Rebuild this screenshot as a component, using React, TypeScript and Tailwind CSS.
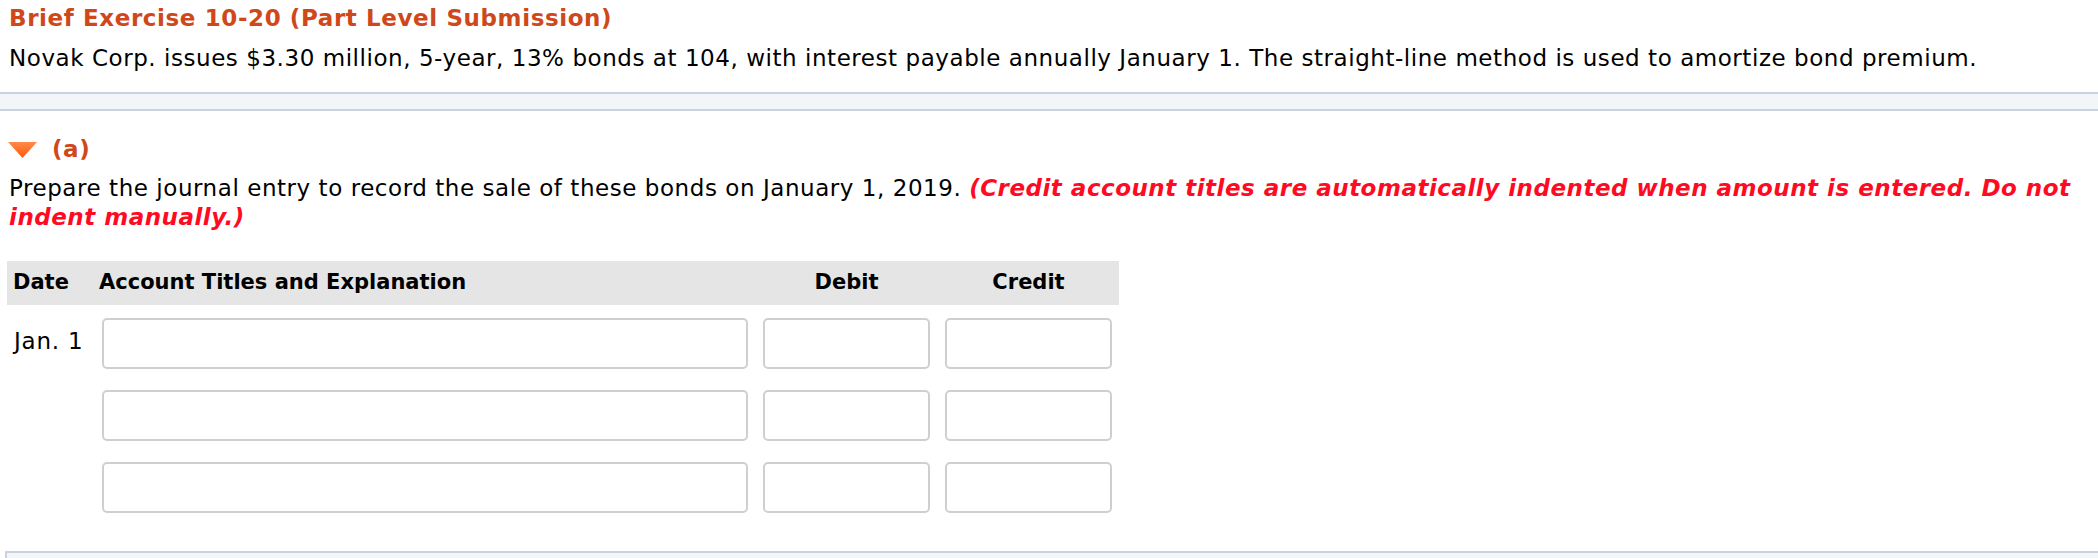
export default function App() {
  const rows = ["Jan. 1", "", ""]

  return (
    <div className="min-h-[558px] bg-white font-['DejaVu_Sans',Verdana,sans-serif] text-[23px] tracking-[0.55px] text-black">
      {/* Exercise heading */}
      <div className="px-[9px] pt-[3px]">
        <h1 className="text-[23px] font-bold leading-[30px] tracking-[0.6px] text-[#cf481b]">
          Brief Exercise 10-20 (Part Level Submission)
        </h1>
        <p className="mt-[10px] leading-[30px]">
          Novak Corp. issues $3.30 million, 5-year, 13% bonds at 104, with interest payable annually January 1. The
          straight-line method is used to amortize bond premium.
        </p>
      </div>

      <div className="mt-[19px] h-[19px] border-y-2 border-[#c9d2de] bg-[#f3f6f9]" />

      {/* Part (a) */}
      <div className="mt-[23px] flex items-center gap-[15px] pl-[8px] leading-[30px]">
        <svg width="29" height="16" viewBox="0 0 29 16" className="mt-[2px]">
          <defs>
            <linearGradient id="tri" x1="0" y1="0" x2="0" y2="1">
              <stop offset="0" stopColor="#ff8a4c" />
              <stop offset="1" stopColor="#ff5a0a" />
            </linearGradient>
          </defs>
          <polygon points="0,0 29,0 14.5,16" fill="url(#tri)" />
        </svg>
        <span className="font-bold text-[#cf481b]">(a)</span>
      </div>

      <p className="mt-[10px] pl-[9px] pr-[8px] leading-[29px]">
        Prepare the journal entry to record the sale of these bonds on January 1, 2019.{" "}
        <span className="font-bold italic tracking-[0.5px] text-[#ff0a22]">
          (Credit account titles are automatically indented when amount is entered. Do not indent manually.)
        </span>
      </p>

      {/* Journal table */}
      <div className="ml-[7px] mt-[29px] w-[1112px]">
        <div className="grid h-[44px] grid-cols-[80px_646px_167px_167px] items-center gap-x-[15px] bg-[#e5e5e5] pr-[7px] text-[21px] font-bold tracking-normal">
          <span className="pl-[6px]">Date</span>
          <span className="-ml-[3px]">Account Titles and Explanation</span>
          <span className="text-center">Debit</span>
          <span className="text-center">Credit</span>
        </div>

        <div className="mt-[13px] flex flex-col gap-[21px]">
          {rows.map((date, i) => (
            <div key={i} className="grid grid-cols-[80px_646px_167px_167px] gap-x-[15px] pr-[7px]">
              <span className="pl-[7px] pt-[8px] leading-[30px] tracking-[0.8px]">{date}</span>
              <input className="h-[51px] rounded-[5px] border-2 border-[#cfcfcf] bg-white px-2 outline-none" />
              <input className="h-[51px] rounded-[5px] border-2 border-[#cfcfcf] bg-white px-2 outline-none" />
              <input className="h-[51px] rounded-[5px] border-2 border-[#cfcfcf] bg-white px-2 outline-none" />
            </div>
          ))}
        </div>
      </div>

      <div className="ml-[5px] mt-[38px] h-[20px] border-l-2 border-t-2 border-[#c9d2de] bg-[#f3f6f9]" />
    </div>
  )
}
